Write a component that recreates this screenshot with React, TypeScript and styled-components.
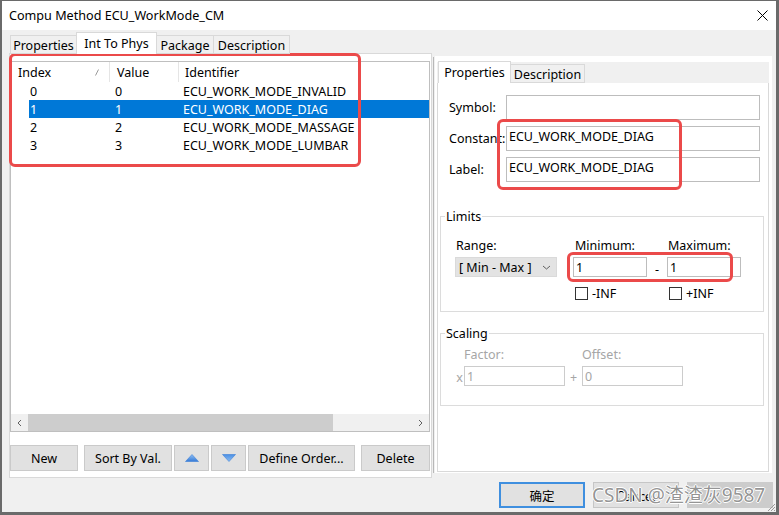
import React from "react"
import styled, { createGlobalStyle } from "styled-components"

const GlobalStyle = createGlobalStyle`
  html, body {
    margin: 0;
    padding: 0;
    background: #f0f0f0;
  }
  * {
    box-sizing: border-box;
  }
`

const Window = styled.div`
  position: relative;
  width: 779px;
  height: 515px;
  display: flex;
  flex-direction: column;
  border-style: solid;
  border-color: #6a6a6a;
  border-width: 1px 3px 3px 2px;
  background: #f0f0f0;
  font-family: "Noto Sans", "Noto Sans CJK SC", sans-serif;
  font-size: 12.5px;
  color: #000;
  overflow: hidden;
`

const TitleBar = styled.div`
  height: 29px;
  flex-shrink: 0;
  display: flex;
  align-items: center;
  justify-content: space-between;
  padding-left: 7px;
  background: #fff;
  font-size: 12.6px;
`

const CloseButton = styled.div`
  width: 28px;
  height: 29px;
  display: flex;
  align-items: center;
  justify-content: center;
`

const Body = styled.div`
  flex: 1;
  display: flex;
  flex-direction: column;
  padding: 3px 3px 0 7px;
`

const MainRow = styled.div`
  display: flex;
  height: 445px;
`

const LeftColumn = styled.div`
  width: 423px;
  display: flex;
  flex-direction: column;
`

const TabStrip = styled.div<{ $bg?: string }>`
  position: relative;
  z-index: 1;
  height: 21px;
  flex-shrink: 0;
  display: flex;
  align-items: flex-end;
  padding-left: 1px;
  margin-bottom: -1px;
  background: ${p => p.$bg || "transparent"};
`

const Tab = styled.div<{ $w: number; $active?: boolean }>`
  width: ${p => p.$w}px;
  height: ${p => (p.$active ? 22 : 19)}px;
  display: flex;
  align-items: center;
  justify-content: center;
  padding-top: ${p => (p.$active ? 0 : 2)}px;
  background: ${p => (p.$active ? "#fff" : "#f0f0f0")};
  border: 1px solid #d9d9d9;
  border-bottom: ${p => (p.$active ? "none" : "1px solid #d9d9d9")};
  margin-right: -1px;
  white-space: nowrap;
`

const LeftPanel = styled.div`
  flex: 1;
  display: flex;
  flex-direction: column;
  background: #fff;
  border: 1px solid #d9d9d9;
  padding-top: 7px;
`

const ListBox = styled.div`
  height: 371px;
  display: flex;
  flex-direction: column;
  border: 1px solid #bfbfbf;
  margin-right: 1px;
`

const HeaderRow = styled.div`
  height: 20px;
  display: flex;
  align-items: stretch;
`

const HeaderCell = styled.div<{ $w?: number; $pad: number; $sep?: boolean }>`
  position: relative;
  width: ${p => (p.$w ? `${p.$w}px` : "auto")};
  flex: ${p => (p.$w ? "none" : 1)};
  display: flex;
  align-items: center;
  padding-left: ${p => p.$pad}px;
  border-right: ${p => (p.$sep ? "1px solid #e5e5e5" : "none")};
`

const SortMark = styled.svg`
  position: absolute;
  right: 10px;
  top: 7px;
`

const Rows = styled.div`
  flex: 1;
`

const Row = styled.div<{ $selected?: boolean }>`
  height: 18px;
  margin-left: 18px;
  display: flex;
  align-items: center;
  background: ${p => (p.$selected ? "#0078d7" : "transparent")};
  color: ${p => (p.$selected ? "#fff" : "#000")};
`

const Cell = styled.div<{ $w?: number; $pad: number }>`
  width: ${p => (p.$w ? `${p.$w}px` : "auto")};
  flex: ${p => (p.$w ? "none" : 1)};
  padding-left: ${p => p.$pad}px;
  white-space: nowrap;
`

const HScroll = styled.div`
  height: 17px;
  display: flex;
  background: #f0f0f0;
`

const ScrollArrow = styled.div`
  width: 17px;
  display: flex;
  align-items: center;
  justify-content: center;
`

const ScrollTrack = styled.div`
  flex: 1;
  display: flex;
`

const ScrollThumb = styled.div`
  width: 305px;
  background: #cdcdcd;
`

const ButtonRow = styled.div`
  display: flex;
  margin-top: 13px;
`

const Button = styled.div<{ $w: number; $gap?: number }>`
  width: ${p => p.$w}px;
  height: 26px;
  margin-left: ${p => p.$gap || 0}px;
  display: flex;
  align-items: center;
  justify-content: center;
  background: #e1e1e1;
  border: 1px solid #cacaca;
  white-space: nowrap;
`

const Splitter = styled.div`
  width: 1px;
  height: 416px;
  margin: 24px 0 0 1px;
  background: #b8b8b8;
`

const RightPane = styled.div`
  width: 337px;
  height: 417px;
  margin: 23px 0 0 1px;
  display: flex;
  flex-direction: column;
  background: #fff;
  padding: 6px 3px 1px 2px;
`

const TabPanel = styled.div`
  flex: 1;
  background: #fff;
  border: 1px solid #d9d9d9;
  padding: 12px 4px 0 2px;
`

const Fields = styled.div`
  display: flex;
  flex-direction: column;
  gap: 6px;
  margin: 0 4px 0 9px;
`

const FieldRow = styled.div`
  display: flex;
  align-items: center;
  height: 25px;
`

const FieldLabel = styled.div`
  width: 57px;
  white-space: nowrap;
`

const TextBox = styled.div<{ $w?: number; $h?: number; $disabled?: boolean }>`
  width: ${p => (p.$w ? `${p.$w}px` : "auto")};
  flex: ${p => (p.$w ? "none" : 1)};
  height: ${p => p.$h || 25}px;
  border: 1px solid ${p => (p.$disabled ? "#cccccc" : "#bdbdbd")};
  background: #fff;
  color: ${p => (p.$disabled ? "#a6a6a6" : "#000")};
  padding: 1px 0 0 2px;
  line-height: 17px;
  white-space: nowrap;
  overflow: hidden;
`

const Group = styled.fieldset<{ $top: number }>`
  margin: ${p => p.$top}px 0 0 0;
  padding: 0;
  border: 1px solid #dcdcdc;
  min-width: 0;
`

const Legend = styled.legend`
  margin-left: 4px;
  padding: 0 1px;
  line-height: 17px;
`

const GroupBody = styled.div<{ $pt: number; $pb: number }>`
  display: flex;
  align-items: flex-start;
  padding: ${p => p.$pt}px 0 ${p => p.$pb}px 14px;
`

const Column = styled.div<{ $w: number; $gap?: number }>`
  width: ${p => p.$w}px;
  margin-right: ${p => p.$gap || 0}px;
  display: flex;
  flex-direction: column;
`

const SmallLabel = styled.div<{ $muted?: boolean; $indent?: number }>`
  height: 17px;
  line-height: 17px;
  margin-bottom: 3px;
  padding-left: ${p => p.$indent || 0}px;
  color: ${p => (p.$muted ? "#a6a6a6" : "#000")};
  white-space: nowrap;
`

const Select = styled.div`
  height: 20px;
  display: flex;
  align-items: center;
  justify-content: space-between;
  padding: 0 5px 0 3px;
  background: #e3e3e3;
  border: 1px solid #dadada;
  white-space: nowrap;
`

const Dash = styled.div`
  width: 20px;
  height: 22px;
  margin-top: 21px;
  display: flex;
  align-items: center;
  justify-content: center;
`

const Prefix = styled.div<{ $w: number }>`
  width: ${p => p.$w}px;
  height: 22px;
  margin-top: 20px;
  display: flex;
  align-items: center;
  justify-content: center;
  color: #a6a6a6;
`

const CheckRow = styled.label`
  height: 16px;
  margin-top: 8px;
  padding-left: 2px;
  display: flex;
  align-items: center;
  gap: 4px;
`

const CheckBox = styled.span`
  width: 13px;
  height: 13px;
  border: 1px solid #333;
  background: #fff;
`

const Footer = styled.div`
  display: flex;
  justify-content: flex-end;
  gap: 8px;
  margin-top: 4px;
`

const DialogButton = styled.div<{ $default?: boolean; $shade?: boolean }>`
  width: 86px;
  height: 26px;
  display: flex;
  align-items: center;
  justify-content: center;
  background: ${p => (p.$shade ? "#cccccc" : "#e1e1e1")};
  border: ${p =>
    p.$default ? "2px solid #3f8fdf" : p.$shade ? "1px solid #cccccc" : "1px solid #c6c6c6"};
  font-family: "Noto Sans CJK SC", "Noto Sans", sans-serif;
`

const Mark = styled.div<{ $x: number; $y: number; $w: number; $h: number }>`
  position: absolute;
  left: ${p => p.$x}px;
  top: ${p => p.$y}px;
  width: ${p => p.$w}px;
  height: ${p => p.$h}px;
  border: 3px solid #eb4a4a;
  border-radius: 6px;
  pointer-events: none;
`

const Watermark = styled.div`
  position: absolute;
  left: 590px;
  top: 481px;
  line-height: 26px;
  font-family: "Noto Sans", "Noto Sans CJK SC", sans-serif;
  font-size: 19px;
  color: rgba(120, 120, 120, 0.8);
  text-shadow: -1px 0 #fff, 1px 0 #fff, 0 1px #fff, 0 -1px #fff;
  white-space: nowrap;
  pointer-events: none;
`

const Grip = styled.svg`
  position: absolute;
  right: 0;
  bottom: 0;
`

const rows = [
  { index: 0, value: 0, id: "ECU_WORK_MODE_INVALID" },
  { index: 1, value: 1, id: "ECU_WORK_MODE_DIAG" },
  { index: 2, value: 2, id: "ECU_WORK_MODE_MASSAGE" },
  { index: 3, value: 3, id: "ECU_WORK_MODE_LUMBAR" },
]

const outerTabs = [
  { label: "Properties", w: 67 },
  { label: "Int To Phys", w: 81, active: true },
  { label: "Package", w: 58 },
  { label: "Description", w: 77 },
]

const Triangle = ({ up }: { up?: boolean }) => (
  <svg width="14" height="8" viewBox="0 0 14 8">
    <defs>
      <linearGradient id={up ? "tu" : "td"} x1="0" y1="0" x2="0" y2="1">
        <stop offset="0" stopColor={up ? "#8fc0f4" : "#4b8fe4"} />
        <stop offset="1" stopColor={up ? "#3579d6" : "#8cbdf2"} />
      </linearGradient>
    </defs>
    <polygon
      points={up ? "7,0.5 13.5,7.5 0.5,7.5" : "0.5,0.5 13.5,0.5 7,7.5"}
      fill={`url(#${up ? "tu" : "td"})`}
      stroke="#3b7fd8"
      strokeWidth="0.6"
    />
  </svg>
)

const Chevron = ({ dir }: { dir: "left" | "right" | "down" }) => {
  const pts =
    dir === "left" ? "4,1 1,4 4,7" : dir === "right" ? "1,1 4,4 1,7" : "1,1 4.5,4 8,1"
  return (
    <svg width={dir === "down" ? 9 : 5} height={dir === "down" ? 5 : 8}>
      <polyline points={pts} fill="none" stroke="#606060" strokeWidth="1" />
    </svg>
  )
}

export default function App() {
  return (
    <>
      <GlobalStyle />
      <Window>
        <TitleBar>
          <span>Compu Method ECU_WorkMode_CM</span>
          <CloseButton>
            <svg width="11" height="11" viewBox="0 0 11 11">
              <path d="M0.5 0.5 L10.5 10.5 M10.5 0.5 L0.5 10.5" stroke="#000" strokeWidth="1" />
            </svg>
          </CloseButton>
        </TitleBar>

        <Body>
          <MainRow>
            <LeftColumn>
              <TabStrip>
                {outerTabs.map(t => (
                  <Tab key={t.label} $w={t.w} $active={t.active}>
                    {t.label}
                  </Tab>
                ))}
              </TabStrip>
              <LeftPanel>
                <ListBox>
                  <HeaderRow>
                    <HeaderCell $w={99} $pad={7} $sep>
                      Index
                      <SortMark width="4" height="7" viewBox="0 0 4 7">
                        <line x1="0.5" y1="6.5" x2="3.5" y2="0.5" stroke="#9a9a9a" />
                      </SortMark>
                    </HeaderCell>
                    <HeaderCell $w={69} $pad={7} $sep>
                      Value
                    </HeaderCell>
                    <HeaderCell $pad={6}>Identifier</HeaderCell>
                  </HeaderRow>
                  <Rows>
                    {rows.map(r => (
                      <Row key={r.index} $selected={r.index === 1}>
                        <Cell $w={81} $pad={1}>
                          {r.index}
                        </Cell>
                        <Cell $w={69} $pad={5}>
                          {r.value}
                        </Cell>
                        <Cell $pad={4}>{r.id}</Cell>
                      </Row>
                    ))}
                  </Rows>
                  <HScroll>
                    <ScrollArrow>
                      <Chevron dir="left" />
                    </ScrollArrow>
                    <ScrollTrack>
                      <ScrollThumb />
                    </ScrollTrack>
                    <ScrollArrow>
                      <Chevron dir="right" />
                    </ScrollArrow>
                  </HScroll>
                </ListBox>
                <ButtonRow>
                  <Button $w={68}>New</Button>
                  <Button $w={88} $gap={6}>
                    Sort By Val.
                  </Button>
                  <Button $w={35} $gap={2}>
                    <Triangle up />
                  </Button>
                  <Button $w={35} $gap={2}>
                    <Triangle />
                  </Button>
                  <Button $w={107} $gap={2}>
                    Define Order...
                  </Button>
                  <Button $w={69} $gap={6}>
                    Delete
                  </Button>
                </ButtonRow>
              </LeftPanel>
            </LeftColumn>

            <Splitter />

            <RightPane>
              <TabStrip $bg="#f0f0f0">
                <Tab $w={73} $active>
                  Properties
                </Tab>
                <Tab $w={75}>Description</Tab>
              </TabStrip>
              <TabPanel>
                <Fields>
                  <FieldRow>
                    <FieldLabel>Symbol:</FieldLabel>
                    <TextBox />
                  </FieldRow>
                  <FieldRow>
                    <FieldLabel>Constant:</FieldLabel>
                    <TextBox>ECU_WORK_MODE_DIAG</TextBox>
                  </FieldRow>
                  <FieldRow>
                    <FieldLabel>Label:</FieldLabel>
                    <TextBox>ECU_WORK_MODE_DIAG</TextBox>
                  </FieldRow>
                </Fields>

                <Group $top={26}>
                  <Legend>Limits</Legend>
                  <GroupBody $pt={12} $pb={10}>
                    <Column $w={102} $gap={16}>
                      <SmallLabel $indent={1}>Range:</SmallLabel>
                      <Select>
                        <span>[ Min - Max ]</span>
                        <Chevron dir="down" />
                      </Select>
                    </Column>
                    <Column $w={74}>
                      <SmallLabel $indent={2}>Minimum:</SmallLabel>
                      <TextBox $h={23}>1</TextBox>
                      <CheckRow>
                        <CheckBox />
                        -INF
                      </CheckRow>
                    </Column>
                    <Dash>-</Dash>
                    <Column $w={74}>
                      <SmallLabel $indent={1}>Maximum:</SmallLabel>
                      <TextBox $h={23}>1</TextBox>
                      <CheckRow>
                        <CheckBox />
                        +INF
                      </CheckRow>
                    </Column>
                  </GroupBody>
                </Group>

                <Group $top={13}>
                  <Legend>Scaling</Legend>
                  <GroupBody $pt={4} $pb={17}>
                    <Prefix $w={9}>x</Prefix>
                    <Column $w={101}>
                      <SmallLabel $muted>Factor:</SmallLabel>
                      <TextBox $h={23} $disabled>
                        1
                      </TextBox>
                    </Column>
                    <Prefix $w={17}>+</Prefix>
                    <Column $w={101}>
                      <SmallLabel $muted>Offset:</SmallLabel>
                      <TextBox $h={23} $disabled>
                        0
                      </TextBox>
                    </Column>
                  </GroupBody>
                </Group>
              </TabPanel>
            </RightPane>
          </MainRow>

          <Footer>
            <DialogButton $default>确定</DialogButton>
            <DialogButton>Cancel</DialogButton>
            <DialogButton $shade />
          </Footer>
        </Body>

        <Mark $x={7} $y={52} $w={352} $h={114} />
        <Mark $x={495} $y={118} $w={185} $h={71} />
        <Mark $x={565} $y={251} $w={166} $h={30} />

        <Watermark>CSDN @渣渣灰9587</Watermark>

        <Grip width="10" height="10" viewBox="0 0 10 10">
          <path d="M9 2 L2 9 M9 5 L5 9 M9 8 L8 9" stroke="#9a9a9a" strokeWidth="1" />
        </Grip>
      </Window>
    </>
  )
}
